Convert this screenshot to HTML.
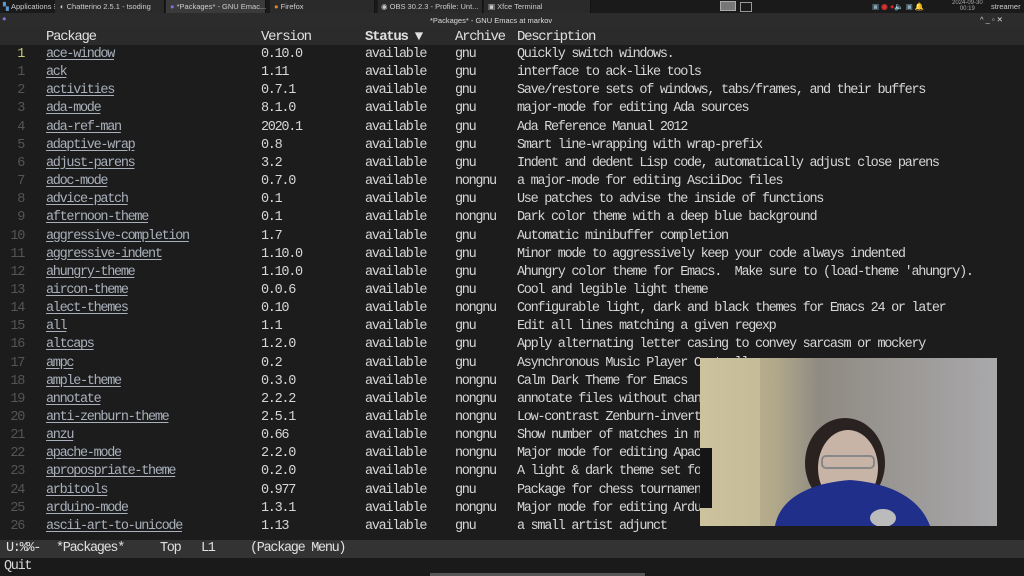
<!DOCTYPE html>
<html><head><meta charset="utf-8"><style>
*{margin:0;padding:0;box-sizing:border-box}
body{width:1024px;height:576px;overflow:hidden;background:#1c1c1c;font-family:"Liberation Mono",monospace;font-size:13.5px;letter-spacing:-1.3px;color:#d6d6d6;position:relative}
.tb{position:absolute;left:0;top:0;width:1024px;height:13px;background:#1a1a1a;font-family:"Liberation Sans",sans-serif;font-size:7.5px;letter-spacing:0;color:#ccc}
.tb span{position:absolute;top:2px;white-space:nowrap}
.tab{position:absolute;top:0;height:13px;background:#2a2a2a;border-right:1px solid #111}
.title{position:absolute;top:13px;left:0;width:1024px;height:14px;background:#2c2c2c;font-family:"Liberation Sans",sans-serif;font-size:7.5px;letter-spacing:0;color:#ddd}
.hdr{position:absolute;top:27px;left:0;width:1024px;height:18px;background:#2b2b2b;font-size:14px;color:#e0e0e0}
.hdr span,.r span{position:absolute;white-space:pre;top:2px}
.r{position:absolute;left:0;width:1024px;height:18px}
.n{color:#555;width:24px;text-align:right;left:0}
.p{left:46px;color:#a9b0bb;text-decoration:underline;text-underline-offset:2px}
.v{left:261px}.s{left:365px}.a{left:455px}.d{left:517px}
.ml{position:absolute;top:540px;left:0;width:1024px;height:18px;background:#333;color:#e0e0e0}
.ml span{position:absolute;top:1px;white-space:pre}
.mb{position:absolute;top:558px;left:0;width:1024px;height:18px;background:#1a1a1a}
</style></head><body>
<div class="tb">
<span style="left:3px;color:#5a9bd5">▚</span><span style="left:11px">Applications ⁝</span>
<div class="tab" style="left:55px;width:110px"></div><span style="left:60px">◐ Chatterino 2.5.1 - tsoding</span>
<div class="tab" style="left:166px;width:100px;background:#3a3a3a"></div><span style="left:170px"><b style="color:#8a6ad8">●</b> *Packages* - GNU Emac...</span>
<div class="tab" style="left:270px;width:105px"></div><span style="left:274px"><b style="color:#e8822a">●</b> Firefox</span>
<div class="tab" style="left:378px;width:105px"></div><span style="left:381px">◉ OBS 30.2.3 - Profile: Unt...</span>
<div class="tab" style="left:484px;width:107px"></div><span style="left:488px">▣ Xfce Terminal</span>
<div style="position:absolute;left:720px;top:1px;width:16px;height:10px;background:#777;border:1px solid #aaa"></div>
<div style="position:absolute;left:740px;top:2px;width:12px;height:10px;border:1px solid #999"></div>
<span style="left:872px;color:#8ab">▣ <b style="color:#d33">◉</b> <b style="color:#d22">●</b>🔈 ▣ 🔔</span>
<span style="left:952px;top:0;font-size:6px;line-height:6px;color:#aaa;text-align:center">2024-09-30<br>00:19</span>
<span style="left:991px">streamer</span>
</div>
<div class="title"><span style="position:absolute;left:2px;top:1px;color:#8a6ad8">●</span><span style="position:absolute;left:430px;top:3px">*Packages* - GNU Emacs at markov</span><span style="position:absolute;left:980px;top:2px">^ _ ▫ ✕</span></div>
<div class="hdr"><span style="left:46px">Package</span><span style="left:261px">Version</span><span style="left:365px;font-weight:bold">Status ▼</span><span style="left:455px">Archive</span><span style="left:517px">Description</span></div>
<div id="rows">
<div class="r" style="top:45px"><span class="n" style="color:#c8c878">1</span><span class="p">ace-window</span><span class="v">0.10.0</span><span class="s">available</span><span class="a">gnu</span><span class="d">Quickly switch windows.</span></div>
<div class="r" style="top:63.15px"><span class="n">1</span><span class="p">ack</span><span class="v">1.11</span><span class="s">available</span><span class="a">gnu</span><span class="d">interface to ack-like tools</span></div>
<div class="r" style="top:81.3px"><span class="n">2</span><span class="p">activities</span><span class="v">0.7.1</span><span class="s">available</span><span class="a">gnu</span><span class="d">Save/restore sets of windows, tabs/frames, and their buffers</span></div>
<div class="r" style="top:99.45px"><span class="n">3</span><span class="p">ada-mode</span><span class="v">8.1.0</span><span class="s">available</span><span class="a">gnu</span><span class="d">major-mode for editing Ada sources</span></div>
<div class="r" style="top:117.6px"><span class="n">4</span><span class="p">ada-ref-man</span><span class="v">2020.1</span><span class="s">available</span><span class="a">gnu</span><span class="d">Ada Reference Manual 2012</span></div>
<div class="r" style="top:135.75px"><span class="n">5</span><span class="p">adaptive-wrap</span><span class="v">0.8</span><span class="s">available</span><span class="a">gnu</span><span class="d">Smart line-wrapping with wrap-prefix</span></div>
<div class="r" style="top:153.9px"><span class="n">6</span><span class="p">adjust-parens</span><span class="v">3.2</span><span class="s">available</span><span class="a">gnu</span><span class="d">Indent and dedent Lisp code, automatically adjust close parens</span></div>
<div class="r" style="top:172.05px"><span class="n">7</span><span class="p">adoc-mode</span><span class="v">0.7.0</span><span class="s">available</span><span class="a">nongnu</span><span class="d">a major-mode for editing AsciiDoc files</span></div>
<div class="r" style="top:190.2px"><span class="n">8</span><span class="p">advice-patch</span><span class="v">0.1</span><span class="s">available</span><span class="a">gnu</span><span class="d">Use patches to advise the inside of functions</span></div>
<div class="r" style="top:208.35px"><span class="n">9</span><span class="p">afternoon-theme</span><span class="v">0.1</span><span class="s">available</span><span class="a">nongnu</span><span class="d">Dark color theme with a deep blue background</span></div>
<div class="r" style="top:226.5px"><span class="n">10</span><span class="p">aggressive-completion</span><span class="v">1.7</span><span class="s">available</span><span class="a">gnu</span><span class="d">Automatic minibuffer completion</span></div>
<div class="r" style="top:244.65px"><span class="n">11</span><span class="p">aggressive-indent</span><span class="v">1.10.0</span><span class="s">available</span><span class="a">gnu</span><span class="d">Minor mode to aggressively keep your code always indented</span></div>
<div class="r" style="top:262.8px"><span class="n">12</span><span class="p">ahungry-theme</span><span class="v">1.10.0</span><span class="s">available</span><span class="a">gnu</span><span class="d">Ahungry color theme for Emacs.  Make sure to (load-theme 'ahungry).</span></div>
<div class="r" style="top:280.95px"><span class="n">13</span><span class="p">aircon-theme</span><span class="v">0.0.6</span><span class="s">available</span><span class="a">gnu</span><span class="d">Cool and legible light theme</span></div>
<div class="r" style="top:299.1px"><span class="n">14</span><span class="p">alect-themes</span><span class="v">0.10</span><span class="s">available</span><span class="a">nongnu</span><span class="d">Configurable light, dark and black themes for Emacs 24 or later</span></div>
<div class="r" style="top:317.25px"><span class="n">15</span><span class="p">all</span><span class="v">1.1</span><span class="s">available</span><span class="a">gnu</span><span class="d">Edit all lines matching a given regexp</span></div>
<div class="r" style="top:335.4px"><span class="n">16</span><span class="p">altcaps</span><span class="v">1.2.0</span><span class="s">available</span><span class="a">gnu</span><span class="d">Apply alternating letter casing to convey sarcasm or mockery</span></div>
<div class="r" style="top:353.55px"><span class="n">17</span><span class="p">ampc</span><span class="v">0.2</span><span class="s">available</span><span class="a">gnu</span><span class="d">Asynchronous Music Player Controller</span></div>
<div class="r" style="top:371.7px"><span class="n">18</span><span class="p">ample-theme</span><span class="v">0.3.0</span><span class="s">available</span><span class="a">nongnu</span><span class="d">Calm Dark Theme for Emacs</span></div>
<div class="r" style="top:389.85px"><span class="n">19</span><span class="p">annotate</span><span class="v">2.2.2</span><span class="s">available</span><span class="a">nongnu</span><span class="d">annotate files without changing them</span></div>
<div class="r" style="top:408px"><span class="n">20</span><span class="p">anti-zenburn-theme</span><span class="v">2.5.1</span><span class="s">available</span><span class="a">nongnu</span><span class="d">Low-contrast Zenburn-inverted theme</span></div>
<div class="r" style="top:426.15px"><span class="n">21</span><span class="p">anzu</span><span class="v">0.66</span><span class="s">available</span><span class="a">nongnu</span><span class="d">Show number of matches in mode-line</span></div>
<div class="r" style="top:444.3px"><span class="n">22</span><span class="p">apache-mode</span><span class="v">2.2.0</span><span class="s">available</span><span class="a">nongnu</span><span class="d">Major mode for editing Apache configs</span></div>
<div class="r" style="top:462.45px"><span class="n">23</span><span class="p">apropospriate-theme</span><span class="v">0.2.0</span><span class="s">available</span><span class="a">nongnu</span><span class="d">A light &amp; dark theme set for Emacs</span></div>
<div class="r" style="top:480.6px"><span class="n">24</span><span class="p">arbitools</span><span class="v">0.977</span><span class="s">available</span><span class="a">gnu</span><span class="d">Package for chess tournaments</span></div>
<div class="r" style="top:498.75px"><span class="n">25</span><span class="p">arduino-mode</span><span class="v">1.3.1</span><span class="s">available</span><span class="a">nongnu</span><span class="d">Major mode for editing Arduino code</span></div>
<div class="r" style="top:516.9px"><span class="n">26</span><span class="p">ascii-art-to-unicode</span><span class="v">1.13</span><span class="s">available</span><span class="a">gnu</span><span class="d">a small artist adjunct</span></div>
</div>
<div class="ml"><span style="left:6px">U:%%-</span><span style="left:56px">*Packages*</span><span style="left:160px">Top</span><span style="left:201px">L1</span><span style="left:250px">(Package Menu)</span></div>
<div class="mb"><span style="position:absolute;left:4px;top:1px">Quit</span><div style="position:absolute;left:430px;top:15px;width:215px;height:3px;background:#555"></div></div>
<svg style="position:absolute;left:700px;top:358px" width="297" height="168" viewBox="0 0 297 168">
<defs><linearGradient id="w" x1="0" x2="1"><stop offset="0" stop-color="#c9c09a"/><stop offset=".25" stop-color="#b2a98a"/><stop offset=".4" stop-color="#8f8b82"/><stop offset="1" stop-color="#a9a8ab"/></linearGradient></defs>
<rect width="297" height="168" fill="url(#w)"/>
<rect x="0" y="0" width="60" height="168" fill="#cfc4a0" opacity=".6"/>
<rect x="0" y="90" width="12" height="60" fill="#151515"/>
<ellipse cx="145" cy="105" rx="40" ry="45" fill="#2a2220"/>
<ellipse cx="148" cy="110" rx="30" ry="38" fill="#c7b4a6"/>
<rect x="122" y="98" width="52" height="12" rx="4" fill="none" stroke="#888" stroke-width="2"/>
<path d="M75 168 C80 140 110 125 150 122 C190 125 220 140 230 168 Z" fill="#1f2f8a"/>
<ellipse cx="183" cy="160" rx="13" ry="9" fill="#bbb"/>
</svg>
</body></html>
